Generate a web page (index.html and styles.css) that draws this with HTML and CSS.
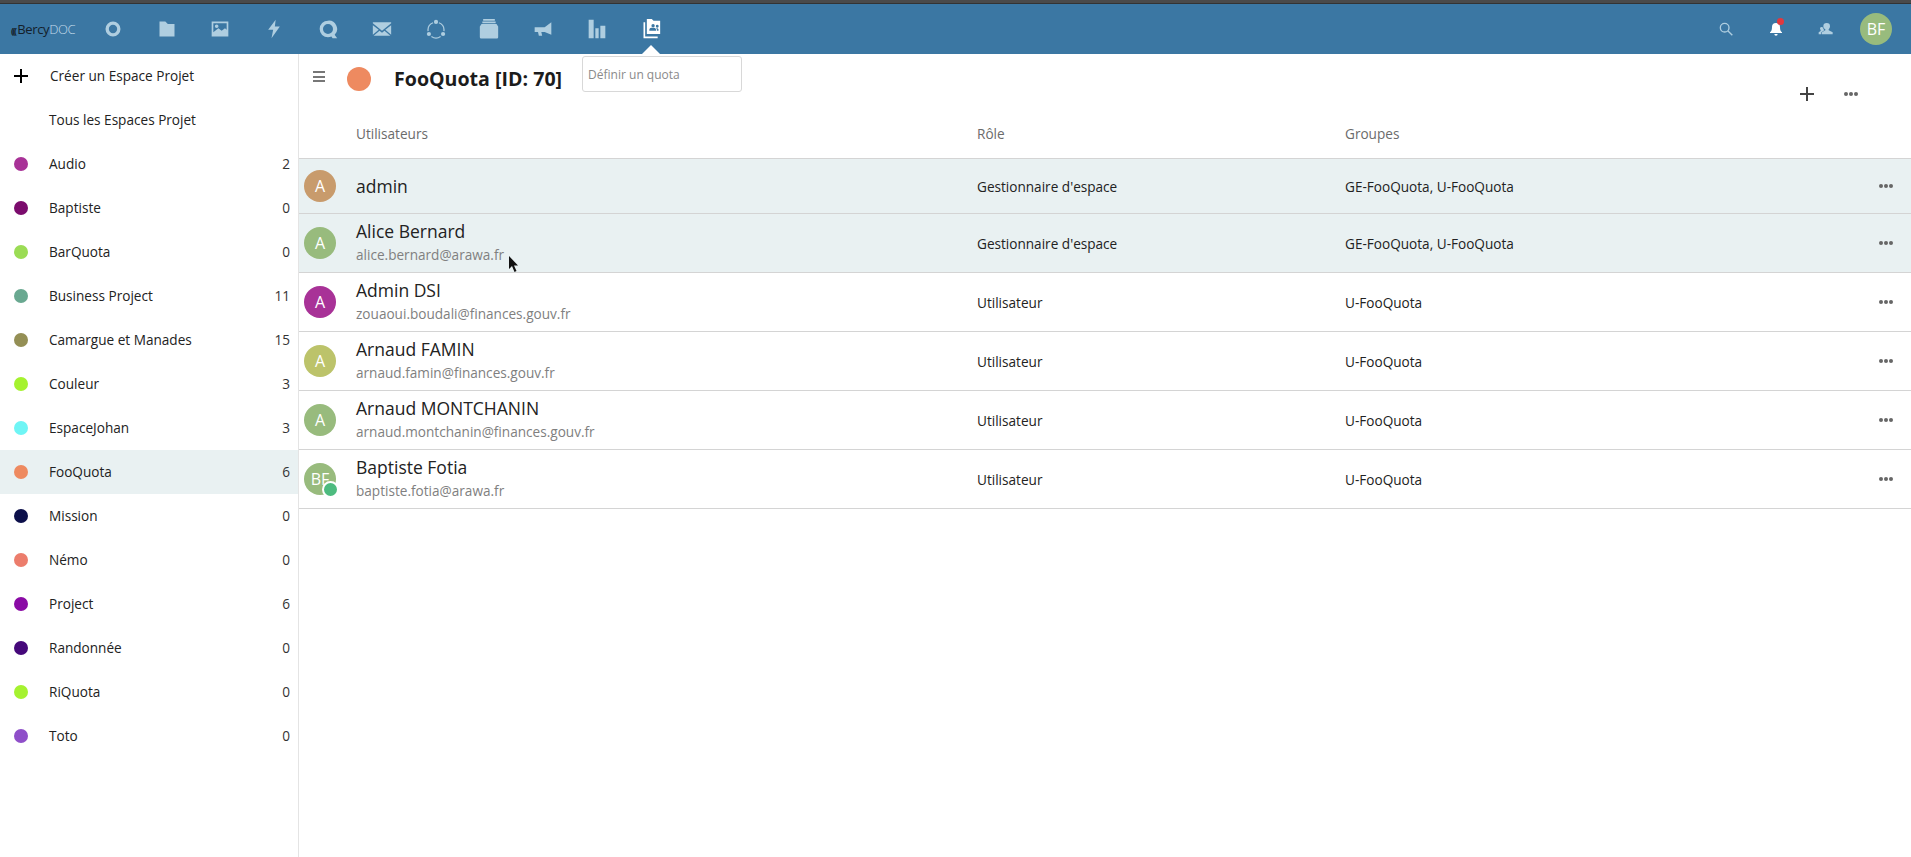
FILE: index.html
```html
<!DOCTYPE html>
<html lang="fr">
<head>
    <meta charset="UTF-8">
    <title>Espace Projet</title>
    <link rel="stylesheet" href="styles.css">
</head>
<body>
    <div class="topline"></div>
    <header class="header">
        <div class="logo"><span class="logo-mark">(((</span><span class="logo-dark">Bercy</span><span class="logo-light">DOC</span></div>
        <nav class="app-nav">
            <a class="app-icon"><svg viewBox="0 0 24 24"><path fill-rule="evenodd" d="M12 3a9 9 0 1 0 0 18 9 9 0 0 0 0-18zm0 4a5 5 0 1 1 0 10 5 5 0 0 1 0-10z"/></svg></a>
            <a class="app-icon"><svg viewBox="0 0 24 24"><path d="M3 3h7l3 3h8v15H3z"/></svg></a>
            <a class="app-icon"><svg viewBox="0 0 24 24"><path fill-rule="evenodd" d="M2 3h20v18H2zM4 5v11l6-5 4 3 4-3 2 2V5zM8 6.500a2.200 2.200 0 1 1 0 4.400 2.200 2.200 0 0 1 0-4.400z"/></svg></a>
            <a class="app-icon"><svg viewBox="0 0 24 24"><path d="M14 1 5 13h6l-2 10 10-14h-6z"/></svg></a>
            <a class="app-icon"><svg viewBox="0 0 24 24"><path fill-rule="evenodd" d="M12 2a10 10 0 0 0 0 20c1.500 0 2.900-.3 4.100-.9l1.400 1.900H23l-3-4A10 10 0 0 0 12 2zm0 4a6 6 0 1 1 0 12 6 6 0 0 1 0-12z"/></svg></a>
            <a class="app-icon"><svg viewBox="0 0 24 24"><path d="M1 4h22v1l-11 9L1 5zM1 7.500l7 5.500-7 6zM23 7.500V19l-7-6zM9 14l3 2.500 3-2.500 7 6H2z"/></svg></a>
            <a class="app-icon"><svg viewBox="0 0 24 24"><circle cx="12" cy="3.500" r="2.500"/><circle cx="3.500" cy="18" r="2.500"/><circle cx="20.500" cy="18" r="2.500"/><path class="ring" d="M8.500 4.500a9.500 9.500 0 0 0-6 10M15.500 4.500a9.500 9.500 0 0 1 6 10M6.500 21a9.500 9.500 0 0 0 11 0"/></svg></a>
            <a class="app-icon"><svg viewBox="0 0 24 24"><path d="M5 0h14v2H5zM4 3h16v2H4zM3 6h18l2 3v13a1.500 1.500 0 0 1-1.500 1.500h-19A1.500 1.500 0 0 1 1 22V9z"/></svg></a>
            <a class="app-icon"><svg viewBox="0 0 24 24"><path d="M22 4v15l-8-3.500h-4l1 4.500H7l-1-4.500H2V10h12z"/></svg></a>
            <a class="app-icon"><svg viewBox="0 0 24 24"><path d="M2 1h6v22H2zM10 11h4v12h-4zM16 8h6v15h-6z"/></svg></a>
            <a class="app-icon is-active"><svg viewBox="0 0 24 24"><path fill-rule="evenodd" d="M7 0h6l2 2h8v16H7zM14.500 6a2 2 0 1 0 0 4 2 2 0 0 0 0-4zm5 1a1.700 1.700 0 1 0 0 3.400 1.700 1.700 0 0 0 0-3.400zM10 14h8v-1.500c0-1.500-2-2-4-2s-4 .5-4 2zm9 0h2v-1.500c0-1-1-1.500-3-1.500 .6.500 1 1 1 1.500z"/><path d="M3 4h2v17h15v2H3z"/></svg></a>
        </nav>
        <div class="header-right">
            <a class="head-btn search-btn"><svg viewBox="0 0 24 24"><circle cx="10" cy="10" r="6.500"/><path d="m15 15 6.500 6.500"/></svg></a>
            <a class="head-btn bell-btn"><svg viewBox="0 0 24 24"><path d="M12 3a6 6 0 0 0-6 6c0 5-1 6-3 8v1h18v-1c-2-2-3-3-3-8a6 6 0 0 0-6-6zM9.500 19.500h5a2.500 2.500 0 0 1-5 0z"/></svg><span class="bell-dot"></span></a>
            <a class="head-btn contacts-btn"><svg viewBox="0 0 24 24"><path d="M13 3a5 5 0 0 1 5 5c0 2-1 3.500-2 4.500v1.500l6 3v3H6v-3l5-3v-1.500C9 11.500 8 10 8 8a5 5 0 0 1 5-5zM5.500 9a3 3 0 0 1 2 .8c.2 1.500 1 3 2 4.200l-4.500 3v3H1v-3l3-2v-1.500a3.500 3.500 0 0 1-1-2.500 2.500 2.500 0 0 1 2.500-2z"/></svg></a>
            <div class="header-avatar">BF</div>
        </div>
    </header>

    <div class="layout">
        <aside class="sidebar">
            <a class="side-item"><span class="side-plus"></span><span class="side-label side-label-new">Créer un Espace Projet</span></a>
            <a class="side-item"><span class="side-blank"></span><span class="side-label">Tous les Espaces Projet</span></a>
            <a class="side-item"><span class="dot c-audio"></span><span class="side-label">Audio</span><span class="count">2</span></a>
            <a class="side-item"><span class="dot c-baptiste"></span><span class="side-label">Baptiste</span><span class="count">0</span></a>
            <a class="side-item"><span class="dot c-barquota"></span><span class="side-label">BarQuota</span><span class="count">0</span></a>
            <a class="side-item"><span class="dot c-business"></span><span class="side-label">Business Project</span><span class="count">11</span></a>
            <a class="side-item"><span class="dot c-camargue"></span><span class="side-label">Camargue et Manades</span><span class="count">15</span></a>
            <a class="side-item"><span class="dot c-couleur"></span><span class="side-label">Couleur</span><span class="count">3</span></a>
            <a class="side-item"><span class="dot c-johan"></span><span class="side-label">EspaceJohan</span><span class="count">3</span></a>
            <a class="side-item is-selected"><span class="dot c-foo"></span><span class="side-label">FooQuota</span><span class="count">6</span></a>
            <a class="side-item"><span class="dot c-mission"></span><span class="side-label">Mission</span><span class="count">0</span></a>
            <a class="side-item"><span class="dot c-nemo"></span><span class="side-label">Némo</span><span class="count">0</span></a>
            <a class="side-item"><span class="dot c-project"></span><span class="side-label">Project</span><span class="count">6</span></a>
            <a class="side-item"><span class="dot c-rando"></span><span class="side-label">Randonnée</span><span class="count">0</span></a>
            <a class="side-item"><span class="dot c-riquota"></span><span class="side-label">RiQuota</span><span class="count">0</span></a>
            <a class="side-item"><span class="dot c-toto"></span><span class="side-label">Toto</span><span class="count">0</span></a>
        </aside>

        <main class="content">
            <div class="title-bar">
                <button class="burger"><span></span><span></span><span></span></button>
                <span class="title-dot c-foo"></span>
                <h1 class="title">FooQuota [ID: 70]</h1>
                <input class="quota" type="text" placeholder="Définir un quota">
                <div class="title-actions">
                    <span class="add-btn"></span>
                    <span class="more"><i></i><i></i><i></i></span>
                </div>
            </div>

            <div class="row head-row">
                <div class="col-user">Utilisateurs</div>
                <div class="col-role">Rôle</div>
                <div class="col-group">Groupes</div>
            </div>

            <div class="row user-row first is-manager">
                <div class="avatar c-admin">A</div>
                <div class="col-user"><div class="name">admin</div></div>
                <div class="col-role">Gestionnaire d'espace</div>
                <div class="col-group">GE-FooQuota, U-FooQuota</div>
                <span class="more"><i></i><i></i><i></i></span>
            </div>
            <div class="row user-row is-manager">
                <div class="avatar c-green">A</div>
                <div class="col-user"><div class="name">Alice Bernard</div><div class="mail">alice.bernard@arawa.fr</div></div>
                <div class="col-role">Gestionnaire d'espace</div>
                <div class="col-group">GE-FooQuota, U-FooQuota</div>
                <span class="more"><i></i><i></i><i></i></span>
            </div>
            <div class="row user-row">
                <div class="avatar c-audio">A</div>
                <div class="col-user"><div class="name">Admin DSI</div><div class="mail">zouaoui.boudali@finances.gouv.fr</div></div>
                <div class="col-role">Utilisateur</div>
                <div class="col-group">U-FooQuota</div>
                <span class="more"><i></i><i></i><i></i></span>
            </div>
            <div class="row user-row">
                <div class="avatar c-olive">A</div>
                <div class="col-user"><div class="name">Arnaud FAMIN</div><div class="mail">arnaud.famin@finances.gouv.fr</div></div>
                <div class="col-role">Utilisateur</div>
                <div class="col-group">U-FooQuota</div>
                <span class="more"><i></i><i></i><i></i></span>
            </div>
            <div class="row user-row">
                <div class="avatar c-green">A</div>
                <div class="col-user"><div class="name">Arnaud MONTCHANIN</div><div class="mail">arnaud.montchanin@finances.gouv.fr</div></div>
                <div class="col-role">Utilisateur</div>
                <div class="col-group">U-FooQuota</div>
                <span class="more"><i></i><i></i><i></i></span>
            </div>
            <div class="row user-row">
                <div class="avatar c-green">BF<span class="status-badge"></span></div>
                <div class="col-user"><div class="name">Baptiste Fotia</div><div class="mail">baptiste.fotia@arawa.fr</div></div>
                <div class="col-role">Utilisateur</div>
                <div class="col-group">U-FooQuota</div>
                <span class="more"><i></i><i></i><i></i></span>
            </div>
        </main>
    </div>

    <svg class="cursor" viewBox="0 0 11 17"><path d="M1 0v13l3-3 2.500 6 2-1-2.500-5.500H10z"/></svg>
</body>
</html>
```

FILE: styles.css
```css
* {
    box-sizing: border-box;
}
body {
    margin: 0;
    height: 857px;
    overflow: hidden;
    font-family: "Open Sans", "Noto Sans", sans-serif;
    font-size: 13.6px;
    color: #222;
    background-color: white;
    position: relative;
}
.topline {
    height: 4px;
    background-color: #4a4a4a;
    border-bottom: 1px solid #333;
}
.header {
    height: 50px;
    background-color: #3b77a3;
    display: flex;
    align-items: center;
    padding-left: 11px;
    padding-right: 19px;
}
.logo {
    width: 75px;
    font-size: 13px;
    letter-spacing: -0.4px;
    white-space: nowrap;
}
.logo-mark {
    font-size: 9px;
    font-weight: bold;
    color: #14202a;
    letter-spacing: -1.6px;
    margin-right: 2px;
}
.logo-dark {
    color: #14202a;
}
.logo-light {
    color: #c3dbea;
    font-weight: 300;
}
.app-nav {
    display: flex;
}
.app-icon {
    width: 53.8px;
    height: 50px;
    display: flex;
    align-items: center;
    justify-content: center;
    fill: #afcee0;
    position: relative;
}
.app-icon svg {
    width: 20px;
    height: 20px;
}
.ring {
    fill: none;
    stroke: #afcee0;
    stroke-width: 1.5;
}
.app-icon.is-active {
    fill: white;
}
.app-icon.is-active::after {
    content: "";
    position: absolute;
    bottom: 0;
    left: 18px;
    border-left: 9px solid transparent;
    border-right: 9px solid transparent;
    border-bottom: 9px solid white;
}
.header-right {
    margin-left: auto;
    display: flex;
    align-items: center;
}
.head-btn {
    width: 50px;
    display: flex;
    justify-content: center;
    position: relative;
}
.head-btn svg {
    width: 16px;
    height: 16px;
}
.search-btn svg {
    fill: none;
    stroke: #afcee0;
    stroke-width: 2;
}
.bell-btn svg {
    fill: white;
}
.bell-dot {
    position: absolute;
    top: -3px;
    left: 26px;
    width: 7px;
    height: 7px;
    border-radius: 50%;
    background-color: #e2383e;
}
.contacts-btn svg {
    fill: #afcee0;
}
.header-avatar {
    width: 32px;
    height: 32px;
    margin-left: 9px;
    border-radius: 50%;
    background-color: #98bb7d;
    color: white;
    font-size: 16px;
    display: flex;
    align-items: center;
    justify-content: center;
}
.layout {
    display: flex;
    height: 803px;
}
.sidebar {
    width: 299px;
    border-right: 1px solid #e4e4e4;
    flex-shrink: 0;
}
.side-item {
    height: 44px;
    display: flex;
    align-items: center;
    padding-left: 14px;
    padding-right: 8px;
}
.side-item.is-selected {
    background-color: #e9f1f2;
}
.side-plus {
    width: 14px;
    height: 14px;
    background: linear-gradient(#000, #000) center / 100% 2px no-repeat, linear-gradient(#000, #000) center / 2px 100% no-repeat;
}
.side-blank {
    width: 14px;
}
.dot {
    width: 14px;
    height: 14px;
    border-radius: 50%;
}
.side-label {
    margin-left: 21px;
    margin-bottom: 1px;
    flex: 1;
}
.side-label-new {
    margin-left: 22px;
}
.count {
    color: #333;
    margin-bottom: 1px;
}
.c-audio { background-color: #a83297; }
.c-baptiste { background-color: #7b0c6d; }
.c-barquota { background-color: #9bdc55; }
.c-business { background-color: #69a890; }
.c-camargue { background-color: #948f55; }
.c-couleur { background-color: #a5f22f; }
.c-johan { background-color: #6ff5f5; }
.c-foo { background-color: #ee8a60; }
.c-mission { background-color: #0c0f4a; }
.c-nemo { background-color: #ec7d6c; }
.c-project { background-color: #8a0aa5; }
.c-rando { background-color: #45087a; }
.c-riquota { background-color: #a5f230; }
.c-toto { background-color: #8f4fc9; }
.c-admin { background-color: #c89b6c; }
.c-green { background-color: #98bb7d; }
.c-olive { background-color: #bcc36a; }
.content {
    flex: 1;
    min-width: 0;
}
.title-bar {
    height: 56px;
    display: flex;
    align-items: flex-start;
    padding-left: 14px;
    padding-right: 53px;
}
.burger {
    width: 12px;
    height: 11px;
    margin-top: 17px;
    padding: 0;
    border: none;
    background: none;
    display: flex;
    flex-direction: column;
    justify-content: space-between;
}
.burger span {
    display: block;
    height: 2px;
    background-color: #777;
}
.title-dot {
    width: 24px;
    height: 24px;
    margin-top: 13px;
    margin-left: 22px;
    border-radius: 50%;
}
.title {
    margin: 11px 0 0 23px;
    font-size: 19.6px;
    line-height: 28px;
    font-weight: 700;
    color: #1c1c1c;
    white-space: nowrap;
}
.quota {
    width: 160px;
    height: 36px;
    margin-top: 2px;
    margin-left: 20px;
    padding: 0 5px;
    border: 1px solid #d8d8d8;
    border-radius: 3px;
    font-family: inherit;
    font-size: 12px;
    background-color: white;
}
.quota::placeholder {
    color: #8a8a8a;
}
.title-actions {
    margin-left: auto;
    margin-top: 33px;
    display: flex;
    align-items: center;
    gap: 30px;
}
.add-btn {
    width: 14px;
    height: 14px;
    background: linear-gradient(#444, #444) center / 100% 2px no-repeat, linear-gradient(#444, #444) center / 2px 100% no-repeat;
}
.more {
    display: flex;
    gap: 1px;
}
.more i {
    width: 4px;
    height: 4px;
    border-radius: 50%;
    background-color: #666;
}
.row {
    display: flex;
    align-items: center;
    border-bottom: 1px solid #d4d4d4;
    padding-right: 18px;
}
.head-row {
    height: 49px;
    padding-left: 57px;
    padding-bottom: 1px;
    color: #6b6b6b;
}
.head-row .col-user {
    flex: 0 0 621px;
}
.user-row {
    height: 59px;
    padding-left: 5px;
}
.user-row.first {
    height: 55px;
}
.is-manager {
    background-color: #e9f1f2;
}
.avatar {
    position: relative;
    width: 32px;
    height: 32px;
    border-radius: 50%;
    color: white;
    font-size: 16px;
    display: flex;
    align-items: center;
    justify-content: center;
    flex-shrink: 0;
}
.status-badge {
    position: absolute;
    right: -3px;
    bottom: -3px;
    width: 17px;
    height: 17px;
    border: 2px solid white;
    border-radius: 50%;
    background-color: #4dbb7f;
}
.user-row .col-user {
    flex: 0 0 621px;
    margin-left: 20px;
}
.col-role {
    flex: 0 0 368px;
}
.col-group {
    flex: 1;
}
.name {
    font-size: 17.500px;
    line-height: 24px;
    color: #222;
}
.name:not(:only-child) {
    margin-top: -3px;
    margin-bottom: 3px;
}
.mail {
    font-size: 13.6px;
    line-height: 18px;
    color: #808080;
}
.cursor {
    position: absolute;
    left: 508px;
    top: 256px;
    width: 11px;
    height: 17px;
    fill: #111;
}
```
